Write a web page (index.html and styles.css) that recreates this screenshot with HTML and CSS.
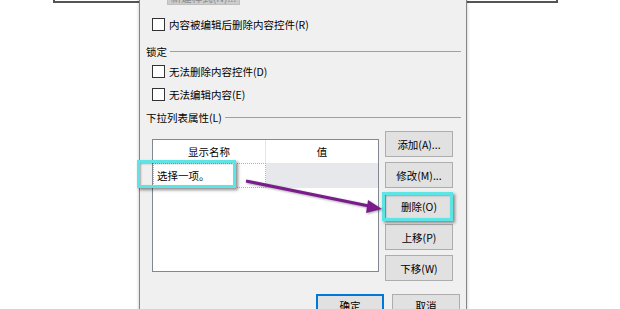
FILE: index.html
```html
<!DOCTYPE html>
<html lang="zh-CN">
<head>
  <meta charset="UTF-8" />
  <title>内容控件属性</title>
  <link rel="stylesheet" href="styles.css">
</head>
<body>
  <div class="backwin"></div>
  <div class="dialog">
    <div class="btn topbtn">新建样式(N)...</div>
    <label class="check first"><span class="box"></span>内容被编辑后删除内容控件(R)</label>
    <div class="group lock"><span>锁定</span></div>
    <label class="check"><span class="box"></span>无法删除内容控件(D)</label>
    <label class="check"><span class="box"></span>无法编辑内容(E)</label>
    <div class="group"><span>下拉列表属性(L)</span></div>
    <div class="listarea">
      <div class="listbox">
        <div class="lrow head"><div class="c1">显示名称</div><div class="c2">值</div></div>
        <div class="lrow sel"><div class="c1 focus">选择一项。</div><div class="c2"></div></div>
      </div>
      <div class="sidebtns">
        <div class="btn">添加(A)...</div>
        <div class="btn">修改(M)...</div>
        <div class="btn">删除(O)</div>
        <div class="btn">上移(P)</div>
        <div class="btn">下移(W)</div>
      </div>
    </div>
    <div class="footer">
      <div class="btn default">确定</div>
      <div class="btn">取消</div>
    </div>
  </div>
  <div class="mark mark-item"></div>
  <div class="mark mark-del"></div>
  <svg class="arrow" width="620" height="309" viewBox="0 0 620 309">
    <line x1="246" y1="181" x2="369" y2="206" stroke="#7a1c8c" stroke-width="3" />
    <polygon points="382,209 368,200 366,213" fill="#7a1c8c" />
  </svg>
</body>
</html>
```

FILE: styles.css
```css
body { margin: 0; width: 620px; height: 309px; overflow: hidden; background: #fff;
  position: relative; font-family: "Noto Sans CJK SC", "Liberation Sans", sans-serif;
  font-size: 10.5px; color: #000; }

.backwin { position: absolute; left: 53px; top: -40px; width: 501px; height: 39px;
  border: 2px solid #555; background: #fff; }

.dialog { position: absolute; left: 139px; top: -20px; width: 326px; height: 340px;
  background: #f0f0f0; border: 1px solid #858585; border-top: none;
  box-shadow: 0 0 3px rgba(0,0,0,0.25); }

.btn { box-sizing: border-box; width: 68px; height: 26px; background: #e1e1e1;
  border: 1px solid #adadad; display: flex; align-items: center; justify-content: center;
  white-space: nowrap; }
.topbtn { width: 73px; height: 24px; margin: 1px 0 0 27px; background: #cccccc;
  border-color: #bfbfbf; color: #8a8a8a; align-items: flex-end; overflow: hidden;
  line-height: 12px; padding-bottom: 0; }

.check { display: flex; align-items: center; height: 23px; padding-left: 12px; }
.check.first { margin-top: 8px; }
.box { box-sizing: border-box; width: 13px; height: 13px; border: 1px solid #333;
  background: #fff; margin-right: 4px; }

.group { display: flex; align-items: center; height: 18px; padding: 0 5px 0 6px; margin-top: 2px; }
.group.lock { margin-top: 6px; }
.group::after { content: ""; flex: 1; height: 1px; background: #a0a0a0; margin-left: 3px; }

.listarea { display: flex; margin-top: 5px; }
.listbox { box-sizing: border-box; width: 227px; height: 133px; margin: 8px 0 0 12px;
  border: 1px solid #828790; background: #fff; }
.lrow { display: flex; }
.c1 { width: 113px; box-sizing: border-box; }
.c2 { flex: 1; }
.head { height: 23px; line-height: 23px; text-align: center; }
.head .c1 { border-right: 1px solid #e5e5e5; }
.sel { height: 25px; line-height: 25px; }
.sel .c1 { padding-left: 3px; border: 1px dotted #f0a060; line-height: 23px; }
.sel .c2 { background: #e6e8ec; }

.sidebtns { display: flex; flex-direction: column; gap: 5px; margin-left: 6px; }

.footer { display: flex; justify-content: flex-end; gap: 8px; padding-right: 6px; margin-top: 13px; }
.footer .btn { height: 23px; }
.default { border-color: #0078d7; box-shadow: inset 0 0 0 1px #0078d7; }

.mark { position: absolute; box-sizing: border-box; border: 3px solid #5fe4e6;
  box-shadow: 2px 2px 3px rgba(0,0,0,0.45), inset 1px 1px 2px rgba(0,0,0,0.3); }
.mark-item { left: 137px; top: 160px; width: 99px; height: 28px; }
.mark-del { left: 382px; top: 192px; width: 71px; height: 29px; }

.arrow { position: absolute; left: 0; top: 0; filter: drop-shadow(1px 1px 1px rgba(0,0,0,0.35)); }
```
